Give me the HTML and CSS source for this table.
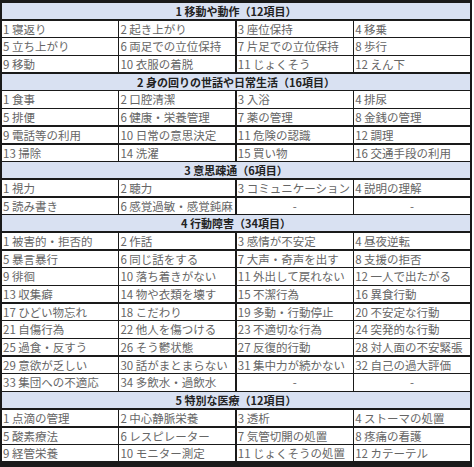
FILE: index.html
```html
<!DOCTYPE html>
<html lang="ja">
<head>
<meta charset="utf-8">
<title>項目一覧</title>
<link rel="stylesheet" href="styles.css">
</head>
<body>
<div class="sheet">
  <div class="head">1 移動や動作（12項目）</div>
  <div class="cell">1 寝返り</div><div class="cell">2 起き上がり</div><div class="cell">3 座位保持</div><div class="cell">4 移乗</div>
  <div class="cell">5 立ち上がり</div><div class="cell">6 両足での立位保持</div><div class="cell">7 片足での立位保持</div><div class="cell">8 歩行</div>
  <div class="cell">9 移動</div><div class="cell">10 衣服の着脱</div><div class="cell">11 じょくそう</div><div class="cell">12 えん下</div>

  <div class="head">2 身の回りの世話や日常生活（16項目）</div>
  <div class="cell">1 食事</div><div class="cell">2 口腔清潔</div><div class="cell">3 入浴</div><div class="cell">4 排尿</div>
  <div class="cell">5 排便</div><div class="cell">6 健康・栄養管理</div><div class="cell">7 薬の管理</div><div class="cell">8 金銭の管理</div>
  <div class="cell">9 電話等の利用</div><div class="cell">10 日常の意思決定</div><div class="cell">11 危険の認識</div><div class="cell">12 調理</div>
  <div class="cell">13 掃除</div><div class="cell">14 洗濯</div><div class="cell">15 買い物</div><div class="cell">16 交通手段の利用</div>

  <div class="head">3 意思疎通（6項目）</div>
  <div class="cell">1 視力</div><div class="cell">2 聴力</div><div class="cell">3 コミュニケーション</div><div class="cell">4 説明の理解</div>
  <div class="cell">5 読み書き</div><div class="cell">6 感覚過敏・感覚鈍麻</div><div class="cell empty">-</div><div class="cell empty">-</div>

  <div class="head">4 行動障害（34項目）</div>
  <div class="cell">1 被害的・拒否的</div><div class="cell">2 作話</div><div class="cell">3 感情が不安定</div><div class="cell">4 昼夜逆転</div>
  <div class="cell">5 暴言暴行</div><div class="cell">6 同じ話をする</div><div class="cell">7 大声・奇声を出す</div><div class="cell">8 支援の拒否</div>
  <div class="cell">9 徘徊</div><div class="cell">10 落ち着きがない</div><div class="cell">11 外出して戻れない</div><div class="cell">12 一人で出たがる</div>
  <div class="cell">13 収集癖</div><div class="cell">14 物や衣類を壊す</div><div class="cell">15 不潔行為</div><div class="cell">16 異食行動</div>
  <div class="cell">17 ひどい物忘れ</div><div class="cell">18 こだわり</div><div class="cell">19 多動・行動停止</div><div class="cell">20 不安定な行動</div>
  <div class="cell">21 自傷行為</div><div class="cell">22 他人を傷つける</div><div class="cell">23 不適切な行為</div><div class="cell">24 突発的な行動</div>
  <div class="cell">25 過食・反すう</div><div class="cell">26 そう鬱状態</div><div class="cell">27 反復的行動</div><div class="cell">28 対人面の不安緊張</div>
  <div class="cell">29 意欲が乏しい</div><div class="cell">30 話がまとまらない</div><div class="cell">31 集中力が続かない</div><div class="cell">32 自己の過大評価</div>
  <div class="cell">33 集団への不適応</div><div class="cell">34 多飲水・過飲水</div><div class="cell empty">-</div><div class="cell empty">-</div>

  <div class="head">5 特別な医療（12項目）</div>
  <div class="cell">1 点滴の管理</div><div class="cell">2 中心静脈栄養</div><div class="cell">3 透析</div><div class="cell">4 ストーマの処置</div>
  <div class="cell">5 酸素療法</div><div class="cell">6 レスピレーター</div><div class="cell">7 気管切開の処置</div><div class="cell">8 疼痛の看護</div>
  <div class="cell">9 経管栄養</div><div class="cell">10 モニター測定</div><div class="cell">11 じょくそうの処置</div><div class="cell">12 カテーテル</div>
</div>
</body>
</html>
```

FILE: styles.css
```css
html, body {
  margin: 0;
  padding: 0;
  background: #ffffff;
}

.sheet {
  width: 472px;
  height: 467px;
  box-sizing: border-box;
  padding: 3px 2px 0 2px;
  background: #1a1a1a;
  display: grid;
  grid-template-columns: repeat(4, 1fr);
  grid-auto-rows: 16.2px;
  gap: 1.5px;
  align-content: start;
  font-family: "Noto Sans CJK JP", "Noto Sans", sans-serif;
}

.head {
  grid-column: 1 / -1;
  background: #d9e1f2;
  color: #222222;
  font-weight: bold;
  font-size: 11px;
  line-height: 16.2px;
  text-align: center;
}

.cell {
  background: #ffffff;
  color: #666666;
  font-size: 11.5px;
  line-height: 16.2px;
  padding-left: 1px;
  white-space: nowrap;
  overflow: hidden;
}

.cell.empty {
  text-align: center;
  padding-left: 0;
}
```
